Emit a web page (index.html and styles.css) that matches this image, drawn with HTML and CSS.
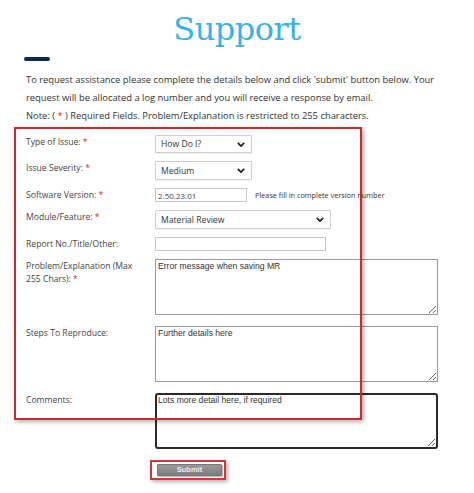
FILE: index.html
```html
<!DOCTYPE html>
<html lang="en">
<head>
<meta charset="utf-8">
<title>Support</title>
<link rel="stylesheet" href="styles.css">
</head>
<body>
<main class="page">
  <h1 class="title">Support</h1>
  <div class="rule"></div>
  <p class="intro">To request assistance please complete the details below and click 'submit' button below. Your request will be allocated a log number and you will receive a response by email.<br>Note: ( <span class="req">*</span> ) Required Fields. Problem/Explanation is restricted to 255 characters.</p>

  <form class="form">
    <label class="lbl">Type of Issue: <span class="req">*</span></label>
    <div class="ctl">
      <div class="sel sel-s">
        <select><option>How Do I?</option></select>
        <svg class="chev" viewBox="0 0 10 6" width="8" height="5"><path d="M1 1 L5 5 L9 1" fill="none" stroke="#222" stroke-width="2.2"/></svg>
      </div>
    </div>

    <label class="lbl">Issue Severity: <span class="req">*</span></label>
    <div class="ctl">
      <div class="sel sel-s sel-m">
        <select><option>Medium</option></select>
        <svg class="chev" viewBox="0 0 10 6" width="8" height="5"><path d="M1 1 L5 5 L9 1" fill="none" stroke="#222" stroke-width="2.2"/></svg>
      </div>
    </div>

    <label class="lbl">Software Version: <span class="req">*</span></label>
    <div class="ctl ctl-inline">
      <input class="txt txt-ver" type="text" value="2.50.23.01">
      <span class="hint">Please fill in complete version number</span>
    </div>

    <label class="lbl">Module/Feature: <span class="req">*</span></label>
    <div class="ctl">
      <div class="sel sel-l">
        <select><option>Material Review</option></select>
        <svg class="chev" viewBox="0 0 10 6" width="8" height="5"><path d="M1 1 L5 5 L9 1" fill="none" stroke="#222" stroke-width="2.2"/></svg>
      </div>
    </div>

    <label class="lbl">Report No./Title/Other:</label>
    <div class="ctl"><input class="txt txt-rep" type="text"></div>

    <label class="lbl lbl-wrap"><span class="line">Problem/Explanation (Max</span><span class="line">255 Chars): <span class="req">*</span></span></label>
    <div class="ctl"><textarea class="area">Error message when saving MR</textarea></div>

    <label class="lbl">Steps To Reproduce:</label>
    <div class="ctl"><textarea class="area">Further details here</textarea></div>

    <label class="lbl">Comments:</label>
    <div class="ctl"><textarea class="area area-focus">Lots more detail here, if required</textarea></div>

    <div class="lbl"></div>
    <div class="ctl submit-row">
      <span class="submit-mark"><button type="button" class="submit">Submit</button></span>
    </div>
  </form>

  <div class="highlight"></div>
</main>
</body>
</html>
```

FILE: styles.css
```css
* { box-sizing: border-box; }

html, body {
  margin: 0;
  padding: 0;
  background: #ffffff;
}

.page {
  position: relative;
  width: 474px;
  height: 493px;
  padding: 0 26px;
  font-family: "Open Sans", "Lato", sans-serif;
  color: #333;
  overflow: hidden;
}

.title {
  margin: 0;
  padding-top: 9px;
  height: 50px;
  text-align: center;
  font-family: "DejaVu Serif", serif;
  font-weight: normal;
  font-size: 32px;
  line-height: 40px;
  letter-spacing: -0.5px;
  color: #3bb1e6;
}

.rule {
  margin: 7px 0 0 -2px;
  width: 26px;
  height: 4px;
  border-radius: 2px;
  background: #0c2b4d;
}

.intro {
  margin: 10px 0 0;
  font-size: 9.4px;
  line-height: 18px;
  color: #333;
}

.req { color: #e0262b; }

.form {
  margin-top: 10px;
  display: grid;
  grid-template-columns: 129px 1fr;
  row-gap: 8px;
  align-items: start;
}

.lbl {
  font-size: 8.6px;
  line-height: 13px;
  padding-top: 1px;
  color: #444;
}

.lbl-wrap { display: flex; flex-direction: column; }
.line { display: block; white-space: nowrap; }

.ctl { display: flex; }

.ctl-inline { align-items: center; gap: 8px; }

.sel {
  position: relative;
  height: 18px;
}

.sel-s { width: 97px; }
.sel-m { height: 19px; }
.sel-l { width: 176px; height: 19px; }

.sel select {
  display: block;
  appearance: none;
  -webkit-appearance: none;
  width: 100%;
  height: 100%;
  margin: 0;
  border: 1px solid #cfcfcf;
  border-radius: 1px;
  background: #fff;
  padding: 0 0 0 5px;
  font-family: "Open Sans", "Lato", sans-serif;
  font-size: 8.6px;
  color: #333;
  box-shadow: 0 1px 1px rgba(0,0,0,0.06);
}

.chev {
  position: absolute;
  right: 7px;
  top: 7px;
}

.txt {
  display: block;
  height: 14px;
  margin: 0;
  border: 1px solid #c8c8c8;
  border-radius: 0;
  padding: 0 2px;
  font-family: "Open Sans", "Lato", sans-serif;
  font-size: 8px;
  color: #444;
  background: #fff;
}

.txt-ver { width: 92px; }
.txt-rep { width: 171px; }

.hint {
  font-size: 7.3px;
  color: #333;
}

.area {
  display: block;
  width: 283px;
  height: 56px;
  margin: 0 0 3px;
  border: 1px solid #9a9a9a;
  border-radius: 0;
  padding: 1px 2px;
  font-family: "Liberation Sans", Arial, sans-serif;
  font-size: 8.6px;
  line-height: 11px;
  color: #333;
  resize: both;
}

.area-focus {
  border: 2px solid #2a2a2a;
  border-radius: 3px;
  padding: 0 1px;
}

.submit-row { padding-top: 0; margin-left: -5px; }

.submit-mark {
  display: inline-block;
  padding: 2px 2px 2px 5px;
  border: 2px solid #d4353a;
  box-shadow: 2px 2px 4px rgba(0,0,0,0.3);
}

.submit {
  display: block;
  width: 65px;
  height: 12px;
  padding: 0;
  border: 1px solid #777;
  border-radius: 1px;
  background: linear-gradient(#9a9a9a, #7c7c7c);
  color: #eee;
  font-family: "Liberation Sans", Arial, sans-serif;
  font-weight: bold;
  font-size: 7.5px;
  line-height: 10px;
  box-shadow: 1px 1px 1px rgba(0,0,0,0.3);
}

.highlight {
  position: absolute;
  left: 14px;
  top: 127px;
  width: 348px;
  height: 293px;
  border: 2px solid #cc2b2e;
  box-shadow: 2px 2px 4px rgba(0,0,0,0.3);
  pointer-events: none;
}
```
